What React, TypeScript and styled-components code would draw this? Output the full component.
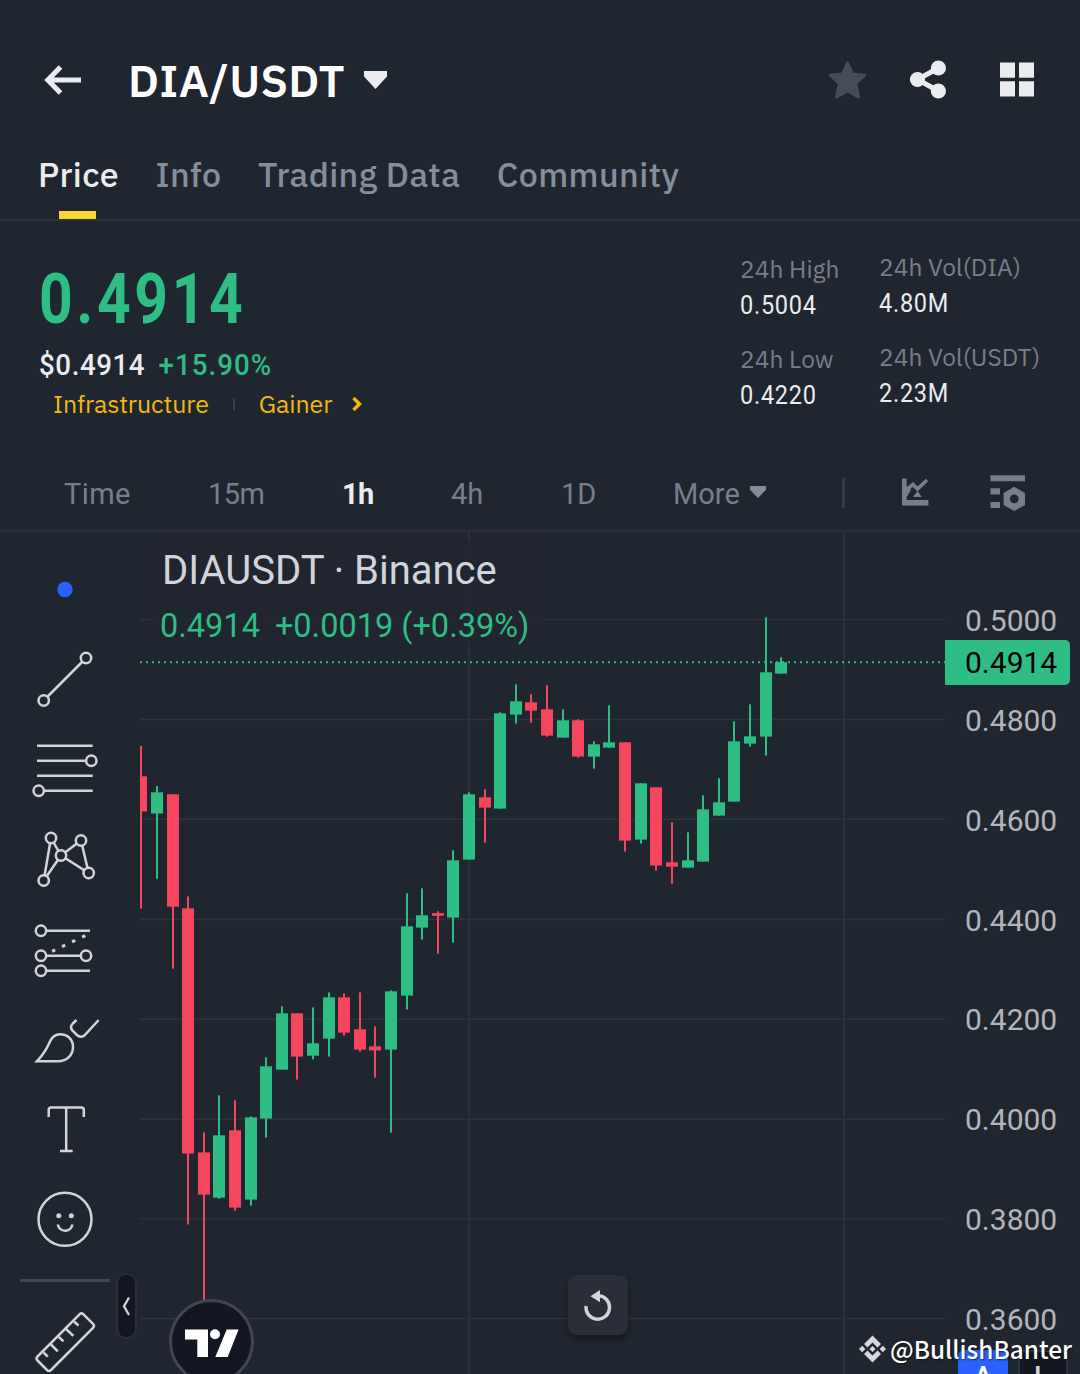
import React from "react";
import styled, { createGlobalStyle } from "styled-components";

const c = {
  bg: "#202630",
  text: "#eaecef",
  muted: "#848e9c",
  faint: "#787f8c",
  line: "#2b303b",
  green: "#2ebd85",
  red: "#f6465d",
  gold: "#f0b90b",
  yellow: "#fcd535",
  tool: "#d1d4dc",
  axis: "#b2b5be",
  ink: "#131722",
};

const plex = `"IBM Plex Sans", "Noto Sans", sans-serif`;
const digits = `Roboto, "Liberation Sans", sans-serif`;

const Global = createGlobalStyle`
  * { box-sizing: border-box; }
  html, body { margin: 0; background: ${c.bg}; }
  body { overflow: hidden; }
  svg { display: block; flex: none; }
`;

const Screen = styled.main`
  position: relative;
  display: flex;
  flex-direction: column;
  width: 1080px;
  height: 1374px;
  overflow: hidden;
  background: ${c.bg};
  color: ${c.text};
  font-family: ${plex};
  white-space: pre;
`;

const TopBar = styled.header`
  display: flex;
  align-items: center;
  height: 146px;
  padding: 14px 46px 0 44px;
`;

const Pair = styled.h1`
  margin: 0 20px 0 46px;
  width: 216px;
  font-size: 45px;
  line-height: 60px;
  font-weight: 600;
  letter-spacing: 0.3px;
  color: #fff;
`;

const Actions = styled.div`
  display: flex;
  align-items: center;
  gap: 43px;
  margin-left: auto;
`;

const Tabs = styled.nav`
  display: flex;
  gap: 36.5px;
  height: 75px;
  padding-left: 38px;
  border-bottom: 2px solid ${c.line};
`;

const Tab = styled.a<{ $active?: boolean }>`
  position: relative;
  font-size: 34px;
  line-height: 56px;
  font-weight: 500;
  letter-spacing: 0.4px;
  color: ${(p) => (p.$active ? c.text : c.muted)};
  ${(p) =>
    p.$active &&
    `&::after {
      content: "";
      position: absolute;
      left: 21px;
      bottom: 0;
      width: 37px;
      height: 8px;
      background: ${c.yellow};
    }`}
`;

const Quote = styled.section`
  display: flex;
  height: 239px;
`;

const QuoteMain = styled.div`
  width: 740px;
  padding: 43px 0 0 39px;
`;

const LastPrice = styled.div`
  font: 700 70px/70px ${digits};
  letter-spacing: 4.3px;
  color: ${c.green};
  transform: scaleX(0.84);
  transform-origin: left;
`;

const Change = styled.div`
  display: flex;
  gap: 14px;
  margin-top: 11px;
  font: 500 29px/40px ${digits};
  letter-spacing: 0.6px;
  transform: scaleX(0.955);
  transform-origin: left;
`;

const Gain = styled.span`
  letter-spacing: 1.1px;
  color: ${c.green};
`;

const Tags = styled.div`
  display: flex;
  align-items: center;
  padding: 2px 0 0 14px;
  font-size: 25px;
  line-height: 34px;
  letter-spacing: -0.1px;
  color: ${c.gold};
`;

const TagRule = styled.i`
  width: 2px;
  height: 11px;
  margin: 0 24px;
  background: #39414d;
`;

const StatColumn = styled.dl<{ $top: number; $width: number }>`
  width: ${(p) => p.$width}px;
  margin: 0;
  padding-top: ${(p) => p.$top}px;
`;

const StatLabel = styled.dt`
  font-size: 24.5px;
  line-height: 37px;
  color: ${c.faint};
`;

const StatValue = styled.dd`
  margin: 0 0 17px;
  font: 400 25px/36px ${digits};
  letter-spacing: 0.8px;
  transform: scaleX(0.94);
  transform-origin: left;
`;

const Intervals = styled.nav`
  display: grid;
  grid-template-columns: 144px 134px 109px 110px 112px 169px 59px 89px auto;
  align-items: center;
  height: 73px;
  padding-left: 64px;
  border-bottom: 4px solid #282c36;
`;

const Interval = styled.a<{ $active?: boolean; $spacing?: number }>`
  display: flex;
  align-items: center;
  gap: 10px;
  font: ${(p) => (p.$active ? 700 : 400)} 29px/69px ${digits};
  letter-spacing: ${(p) => p.$spacing ?? 0}px;
  color: ${(p) => (p.$active ? c.text : c.faint)};

  svg { margin-top: -6px; }
`;

const IntervalRule = styled.i`
  width: 3px;
  height: 30px;
  margin-top: -4px;
  background: #343b47;
`;

const IntervalIcon = styled.svg`
  margin-top: -2px;
`;

const Workspace = styled.section`
  display: flex;
  height: 841px;
`;

const ToolRail = styled.aside`
  display: flex;
  flex-direction: column;
  width: 140px;
  padding-top: 12px;
`;

const RailRule = styled.hr`
  width: 90px;
  height: 3px;
  margin: 14px 0 15px 20px;
  border: 0;
  background: #434651;
  flex: none;
`;

const Plot = styled.div`
  position: relative;
  width: 805px;
`;

const Legend = styled.div`
  position: absolute;
  left: 10px;
  top: 7px;
  width: 394px;
  height: 106px;
  padding-left: 10px;
  background: rgba(32, 38, 48, 0.75);
  font-family: ${digits};
`;

const LegendTitle = styled.div`
  padding-left: 2px;
  font-size: 40px;
  line-height: 62px;
  color: ${c.tool};
`;

const LegendValues = styled.div`
  display: flex;
  gap: 15px;
  font-size: 32.5px;
  line-height: 48px;
  color: ${c.green};
`;

const Reset = styled.button`
  position: absolute;
  left: 428px;
  top: 742px;
  width: 60px;
  height: 60px;
  padding: 0;
  border: 0;
  border-radius: 9px;
  background: #2a2e39;
  box-shadow: 0 4px 8px rgba(0, 0, 0, 0.4);
`;

const Collapse = styled.button`
  position: absolute;
  left: 116px;
  top: 1273px;
  width: 21px;
  height: 66px;
  padding: 0;
  border: 2px solid #2a2e39;
  border-radius: 10px;
  background: ${c.ink};
`;

const Brand = styled.div`
  position: absolute;
  left: 29px;
  top: 766px;
  width: 85px;
  height: 85px;
  border: 3px solid #434651;
  border-radius: 50%;
  background: ${c.ink};
`;

const Axis = styled.div`
  position: relative;
  display: flex;
  flex-direction: column;
  width: 135px;
  padding-top: 38.3px;
  font: 400 30px/100px ${digits};
  color: ${c.axis};
`;

const Level = styled.div`
  height: 99.75px;
  padding-left: 20px;
  line-height: 99.75px;
  flex: none;
`;

const PriceTag = styled.div`
  position: absolute;
  left: 0;
  top: 107px;
  width: 125px;
  height: 45px;
  padding-left: 20px;
  border-radius: 0 5px 5px 0;
  background: ${c.green};
  color: #000;
  line-height: 46px;
`;

const ScaleModes = styled.div`
  position: absolute;
  left: 13px;
  top: 817px;
  display: flex;
  gap: 10px;
`;

const ScaleMode = styled.button<{ $on?: boolean }>`
  width: 50px;
  height: 50px;
  padding: ${(p) => (p.$on ? "4px 0 0" : "4px 3px 0 0")};
  border: 2px solid ${(p) => (p.$on ? "#2962ff" : "#2f333e")};
  border-radius: 6px;
  background: ${(p) => (p.$on ? "#2962ff" : c.ink)};
  color: ${(p) => (p.$on ? "#fff" : c.tool)};
  font: 500 28px/36px ${digits};
`;

const Watermark = styled.div`
  position: absolute;
  right: 8px;
  bottom: 6px;
  display: flex;
  align-items: center;
  gap: 4px;
  font: 500 24.4px/39px "Noto Sans CJK SC", "Noto Sans", sans-serif;
  color: #fff;
  text-shadow: 1px 1px 2px rgba(0, 0, 0, 0.6);
`;

type Candle = [x: number, high: number, top: number, bottom: number, low: number, up: 0 | 1];

const candles: Candle[] = [
  [141, 746, 776.3, 811.5, 908.5, 0],
  [157, 786, 792.3, 813.5, 878.8, 1],
  [173, 794.3, 794.3, 906.7, 968.6, 0],
  [188, 896.4, 908.3, 1153.5, 1224.4, 0],
  [204, 1132.3, 1152.4, 1194.6, 1304, 0],
  [219, 1095.3, 1135.3, 1197.7, 1198.7, 1],
  [235, 1100.3, 1130.3, 1207.6, 1210.6, 0],
  [251, 1116.3, 1117.3, 1199.6, 1205.6, 1],
  [266, 1057.3, 1066.3, 1118.6, 1137.6, 1],
  [282, 1006.3, 1013.3, 1069.6, 1069.6, 1],
  [297, 1013.3, 1013.3, 1056.6, 1079.6, 0],
  [313, 1007.4, 1043.3, 1055.7, 1059.4, 1],
  [329, 992.4, 997.3, 1038.6, 1056.6, 1],
  [344, 993.3, 997.3, 1032.6, 1035.6, 0],
  [360, 992.4, 1029.3, 1049.6, 1051.6, 0],
  [375, 1026.4, 1046.3, 1050.4, 1077.6, 0],
  [391, 990.3, 991.3, 1049.6, 1132.6, 1],
  [407, 893.3, 926.3, 995.6, 1009.6, 1],
  [422, 888.3, 915.3, 927.6, 939.6, 1],
  [438, 911.3, 913.1, 915.8, 953.6, 0],
  [453, 850.3, 860.3, 917.6, 942.6, 1],
  [469, 792.3, 794.3, 859.6, 859.6, 1],
  [485, 789.3, 797.3, 807.6, 842.6, 0],
  [500, 712.3, 713.3, 808.6, 808.6, 1],
  [516, 684.3, 701.3, 714.6, 723.6, 1],
  [531, 694.3, 702.3, 710.6, 722.6, 0],
  [547, 685.3, 709.3, 735.6, 736.6, 0],
  [563, 709.3, 720.3, 737.6, 737.6, 1],
  [578, 719.3, 720.3, 756.6, 757.6, 0],
  [594, 741.3, 744.3, 756.6, 768.6, 1],
  [609, 705.3, 742.3, 747.6, 747.6, 1],
  [625, 742.3, 742.3, 840.6, 851.6, 0],
  [641, 783.3, 783.3, 839.6, 843.6, 1],
  [656, 787.3, 787.3, 865.6, 870.6, 0],
  [672, 822.3, 862.3, 866.6, 883.6, 0],
  [688, 832.3, 860.3, 867.6, 867.6, 1],
  [703, 795.3, 809.3, 861.6, 861.6, 1],
  [719, 778.3, 802.3, 815.6, 815.6, 1],
  [734, 721.3, 741.3, 801.6, 801.6, 1],
  [750, 704.3, 736.3, 743.6, 746.6, 1],
  [766, 617.3, 672.3, 736.6, 755.6, 1],
  [781, 657.3, 662.2, 673.6, 673.6, 1],
];

const levels = ["0.5000", "0.4800", "0.4600", "0.4400", "0.4200", "0.4000", "0.3800", "0.3600"];
const gridRows = [619.5, 719.4, 819.3, 919.3, 1019.3, 1119.2, 1218.8, 1318.5];

const CandleChart = () => (
  <svg width="805" height="841" viewBox="140 533 805 841">
    {gridRows.map((y) => (
      <rect key={y} x="140" y={y - 0.7} width="805" height="1.5" fill="#2d333e" />
    ))}
    <rect x="468" y="533" width="2" height="841" fill="#2b313b" />
    <rect x="843" y="533" width="2" height="841" fill="#2b313b" />
    <path d="M140 662.3H945" stroke={c.green} strokeWidth="2" strokeDasharray="2 4" />
    {candles.map(([x, high, top, bottom, low, up]) => (
      <g key={x} fill={up ? c.green : c.red}>
        <rect x={x - 1} y={high} width="2" height={low - high} />
        <rect x={x - 6} y={top} width="12" height={bottom - top} />
      </g>
    ))}
  </svg>
);

const Tool = ({ y, children }: { y: number; children: React.ReactNode }) => (
  <svg
    width="140"
    height="90"
    viewBox={`0 ${y - 45} 140 90`}
    fill="none"
    stroke={c.tool}
    strokeWidth="2.5"
  >
    {children}
  </svg>
);

const Nodes = ({ at }: { at: [number, number][] }) => (
  <>
    {at.map(([x, y]) => (
      <circle key={`${x}-${y}`} cx={x} cy={y} r="5.2" fill={c.bg} />
    ))}
  </>
);

const Caret = ({ w, h, color }: { w: number; h: number; color: string }) => (
  <svg width={w} height={h} viewBox="0 0 23 18" preserveAspectRatio="none">
    <path d="M0 0H23V5.5L11.5 18L0 5.5Z" fill={color} />
  </svg>
);

const tabs = ["Price", "Info", "Trading Data", "Community"];

export default function App() {
  return (
    <Screen>
      <Global />
      <TopBar>
        <svg width="38" height="30" viewBox="44 65 38 30" fill="none" stroke={c.text} strokeWidth="5">
          <path d="M81 80H49M60.5 67L47.8 80L60.5 93" />
        </svg>
        <Pair>DIA/USDT</Pair>
        <Caret w={23} h={18} color={c.text} />
        <Actions>
          <svg width="38" height="40" viewBox="828 60 38 40">
            <path
              d="M847.5 63L852.5 74L864.5 75.3L855.8 83.5L858.5 97L847.5 91L836.5 97L839.2 83.5L830.5 75.3L842.5 74Z"
              fill="#474d57"
              stroke="#474d57"
              strokeWidth="3"
              strokeLinejoin="round"
            />
          </svg>
          <svg width="38" height="40" viewBox="909 60 38 40" fill={c.text}>
            <path d="M938.4 68L917.5 79.5L938.4 91" fill="none" stroke={c.text} strokeWidth="5" />
            <circle cx="938.4" cy="68" r="7.6" />
            <circle cx="917.5" cy="79.5" r="7.6" />
            <circle cx="938.4" cy="91" r="7.6" />
          </svg>
          <svg width="44" height="36" viewBox="990 62 44 36" fill={c.text}>
            <path d="M1000 62.5h15v15.2h-15zM1019 62.5h15v15.2h-15zM1000 81.3h15v15.2h-15zM1019 81.3h15v15.2h-15z" />
          </svg>
        </Actions>
      </TopBar>

      <Tabs>
        {tabs.map((label, i) => (
          <Tab key={label} $active={i === 0}>
            {label}
          </Tab>
        ))}
      </Tabs>

      <Quote>
        <QuoteMain>
          <LastPrice>0.4914</LastPrice>
          <Change>
            <span>$0.4914</span>
            <Gain>+15.90%</Gain>
          </Change>
          <Tags>
            <span>Infrastructure</span>
            <TagRule />
            <span>Gainer</span>
            <svg width="30" height="16" viewBox="332 397 30 16" fill="none" stroke={c.gold} strokeWidth="3.4">
              <path d="M353.5 399L359.5 405L353.5 411" />
            </svg>
          </Tags>
        </QuoteMain>
        <StatColumn $top={30} $width={139}>
          <StatLabel>24h High</StatLabel>
          <StatValue>0.5004</StatValue>
          <StatLabel>24h Low</StatLabel>
          <StatValue>0.4220</StatValue>
        </StatColumn>
        <StatColumn $top={28} $width={200}>
          <StatLabel>24h Vol(DIA)</StatLabel>
          <StatValue>4.80M</StatValue>
          <StatLabel>24h Vol(USDT)</StatLabel>
          <StatValue>2.23M</StatValue>
        </StatColumn>
      </Quote>

      <Intervals>
        <Interval $spacing={0.4}>Time</Interval>
        <Interval $spacing={-0.6}>15m</Interval>
        <Interval $active $spacing={-0.6}>1h</Interval>
        <Interval>4h</Interval>
        <Interval>1D</Interval>
        <Interval>
          More
          <Caret w={16} h={12} color="#858b98" />
        </Interval>
        <IntervalRule />
        <IntervalIcon width="28" height="34" viewBox="901 477 28 34" fill="#787e8b">
          <path d="M902 478.5h4.6v21.5h21.8v5.6H902z" />
          <path d="M906 490L913 484.5L917.5 489L927 480" fill="none" stroke="#787e8b" strokeWidth="3.6" />
          <path d="M906 486V498L911 490zM917.5 491L921.8 497H913z" />
        </IntervalIcon>
        <IntervalIcon width="36" height="38" viewBox="990 475 36 38" fill="#787e8b">
          <path d="M990.5 475.3H1025V481.3H990.5zM990.5 488.3H1000V494.5H990.5zM990.5 502H1000V508H990.5z" />
          <path
            fillRule="evenodd"
            d="M1014.2 486.8L1025 493V505L1014.2 511L1003.6 505V493ZM1014.2 494.5A4.4 4.4 0 1 0 1014.2 503.3A4.4 4.4 0 1 0 1014.2 494.5Z"
          />
        </IntervalIcon>
      </Intervals>

      <Workspace>
        <ToolRail>
          <Tool y={590}>
            <circle cx="65" cy="589.5" r="7.7" fill="#2962ff" stroke="none" />
          </Tool>
          <Tool y={680}>
            <path d="M43.7 700.5L86 658" />
            <Nodes at={[[43.7, 700.5], [86, 658]]} />
          </Tool>
          <Tool y={770}>
            <path d="M37 745.7H92.7M37 760.7H91M37 775.7H92.7M39 790.7H92.7" />
            <Nodes at={[[91.3, 760.7], [38.7, 790.7]]} />
          </Tool>
          <Tool y={860}>
            <path d="M43.7 880.5L51 838L61 855.5L81 840.5L88.7 873L61 855.5Z" />
            <Nodes at={[[51, 838], [81, 840.5], [61, 855.5], [43.7, 880.5], [88.7, 873]]} />
          </Tool>
          <Tool y={950}>
            <path d="M41 930.7H90M41 955.7H86M41 970.7H90" />
            <path d="M52 951.3L87 934.7" strokeWidth="3" strokeDasharray="3.5 7.6" />
            <Nodes at={[[41, 930.7], [41, 955.7], [41, 970.7], [86, 955.7]]} />
          </Tool>
          <Tool y={1040}>
            <path d="M37 1061.2C45 1053 47 1048 50 1041.5C52.5 1036 56 1034.2 60 1034.2C68 1034.2 73 1040 73 1047C73 1055 67 1061.2 58 1061.2Z" />
            <path d="M76.5 1020L72.8 1023.5C70.5 1026 70.3 1028 72.3 1030.5L77 1035C79.5 1037.5 82.5 1037.4 85 1034.8L98.7 1020" />
          </Tool>
          <Tool y={1130}>
            <path d="M48.7 1117V1110Q48.7 1107.5 51.2 1107.5H81.3Q83.8 1107.5 83.8 1110V1117M66.2 1107.5V1151M60 1151H72.7" />
          </Tool>
          <Tool y={1220}>
            <circle cx="65" cy="1219.3" r="26.5" />
            <circle cx="58.8" cy="1215.7" r="2.5" fill={c.tool} stroke="none" />
            <circle cx="71.3" cy="1215.7" r="2.5" fill={c.tool} stroke="none" />
            <path d="M57.7 1224.5C60 1232.7 70.3 1232.7 72.5 1224.5" />
          </Tool>
          <RailRule />
          <Tool y={1342}>
            <path
              strokeLinejoin="round"
              d="M79.5 1314.3Q81.5 1312.3 83.5 1314.3L93 1323.8Q95 1325.8 93 1327.8L51 1370Q49 1372 47 1370L37.5 1360.5Q35.5 1358.5 37.5 1356.5Z"
            />
            <path d="M43.5 1352.5L47.8 1356.7M51 1344.5L57.8 1351.3M58.8 1337L63.5 1341.3M66 1329L73.4 1335.9M74 1321.5L78.5 1325.5" />
          </Tool>
        </ToolRail>

        <Plot>
          <CandleChart />
          <Legend>
            <LegendTitle>DIAUSDT · Binance</LegendTitle>
            <LegendValues>
              <span>0.4914</span>
              <span>+0.0019 (+0.39%)</span>
            </LegendValues>
          </Legend>
          <Reset aria-label="Reset chart">
            <svg width="60" height="60" viewBox="568 1275 60 60">
              <path
                d="M586 1306A11.8 11.8 0 1 0 598.5 1295.6"
                fill="none"
                stroke={c.tool}
                strokeWidth="3.4"
              />
              <path d="M590.5 1296.3L600 1290V1302.3Z" fill={c.tool} />
            </svg>
          </Reset>
          <Brand>
            <svg width="79" height="79" viewBox="172 1302 79 79" fill="#fff">
              <path d="M185 1329.5H208V1357H197.3V1339.5H185ZM226.7 1329.5H238.6L227.7 1357H215.3Z" />
              <circle cx="215" cy="1334.3" r="5" />
            </svg>
          </Brand>
        </Plot>

        <Axis>
          {levels.map((level) => (
            <Level key={level}>{level}</Level>
          ))}
          <PriceTag>0.4914</PriceTag>
          <ScaleModes>
            <ScaleMode $on>A</ScaleMode>
            <ScaleMode>L</ScaleMode>
          </ScaleModes>
        </Axis>
      </Workspace>

      <Collapse aria-label="Hide toolbar">
        <svg width="17" height="62" viewBox="118 1275 17 62" fill="none" stroke={c.tool} strokeWidth="2.3">
          <path d="M129 1297.5L124 1306.3L129 1315" />
        </svg>
      </Collapse>

      <Watermark>
        <svg width="27" height="28" viewBox="0 0 28 28" fill="#d6d8dc">
          <path d="M14 0L22.8 8.8L19.2 12.4L14 7.2L8.8 12.4L5.2 8.8ZM14 28L22.8 19.2L19.2 15.6L14 20.8L8.8 15.6L5.2 19.2ZM14 10.8L17.2 14L14 17.2L10.8 14ZM3.3 10.7L6.6 14L3.3 17.3L0 14ZM24.7 10.7L28 14L24.7 17.3L21.4 14Z" />
        </svg>
        <span>@BullishBanter</span>
      </Watermark>
    </Screen>
  );
}
